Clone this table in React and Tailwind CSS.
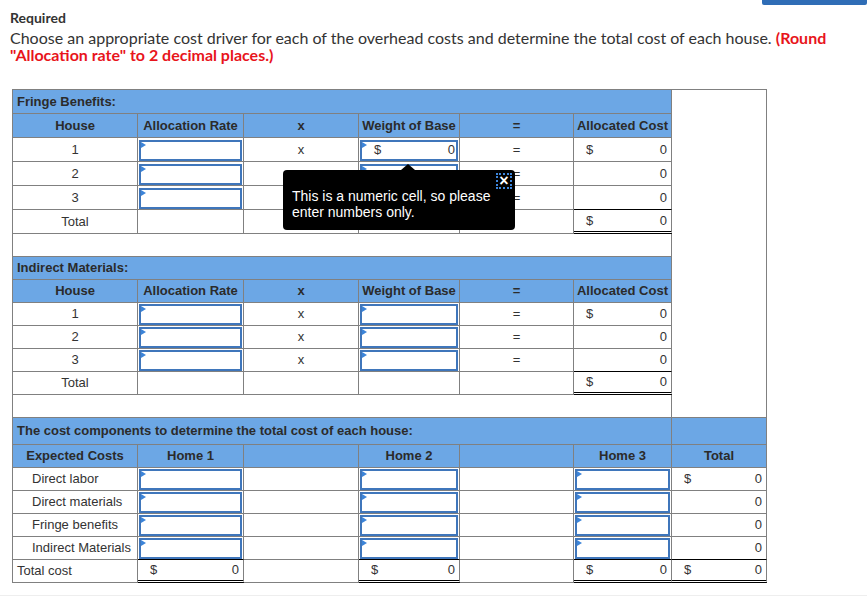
import React from "react";

const LINE = "border-r border-b border-[#808080]";
const BLUE = "bg-[#6ca7e5]";

// small blue marker in the top-left corner of every entry cell
const Marker = () => (
  <span className="absolute left-0 top-0 w-0 h-0 border-l-[5px] border-l-[#3c84d8] border-y-[3px] border-y-transparent" />
);

const HeadCell = ({ children, className = "" }) => (
  <td className={`${LINE} ${BLUE} font-bold text-[13px] text-[#2b2b2b] text-center ${className}`}>
    {children}
  </td>
);

const HeadSpan = ({ children, colSpan, className = "" }) => (
  <td
    colSpan={colSpan}
    className={`${LINE} ${BLUE} font-bold text-[13px] text-[#2b2b2b] text-left pl-1 ${className}`}
  >
    {children}
  </td>
);

const TextCell = ({ children, className = "" }) => (
  <td className={`${LINE} text-[13px] text-[#333] text-center ${className}`}>{children}</td>
);

const InputCell = ({ dollar, under }) => (
  <td className={`${LINE} p-0 ${under ? "border-b-black" : ""}`}>
    <div className="relative mx-px mt-px h-[21px] border-2 border-[#3f76bb] bg-white flex items-center justify-between pl-3 pr-[1px] text-[13px] text-[#333]">
      <Marker />
      {dollar && (
        <>
          <span>$</span>
          <span>0</span>
        </>
      )}
    </div>
  </td>
);

const MoneyCell = ({ dollar, total, under }) => (
  <td
    className={`${LINE} text-[13px] text-[#333] p-0 ${
      total ? "border-b-[3px] border-double border-b-black" : ""
    } ${under ? "border-b-black" : ""}`}
  >
    <div className="flex justify-between pl-3 pr-[4px]">
      <span>{dollar ? "$" : ""}</span>
      <span>0</span>
    </div>
  </td>
);

const Blank = ({ under, colSpan, className = "" }) => (
  <td colSpan={colSpan} className={`${LINE} ${under ? "border-b-black" : ""} ${className}`} />
);

const costRows = ["Direct labor", "Direct materials", "Fringe benefits", "Indirect Materials"];

export default function App() {
  return (
    <div className="relative w-[867px] h-[602px] bg-white overflow-hidden font-['Liberation_Sans',Arial,sans-serif]">
      <div className="flex justify-end">
        <div className="w-[105px] h-[5px] bg-[#2f6db6] rounded-b-[2px]" />
      </div>

      <div className="pl-[10px] pr-2 text-[#333] font-['Lato',sans-serif]">
        <div className="text-[14px] font-bold leading-[18px] mt-[4px]">Required</div>
        <p className="text-[16px] leading-[17px] mt-[2px]">
          Choose an appropriate cost driver for each of the overhead costs and determine the total
          cost of each house.{" "}
          <span className="font-bold text-[#e8141b]">
            (Round "Allocation rate" to 2 decimal places.)
          </span>
        </p>
      </div>

      <table className="ml-[12px] mt-[26px] table-fixed border-separate border-spacing-0 border-l border-t border-[#808080] w-[754px]">
        <colgroup>
          <col className="w-[125px]" />
          <col className="w-[106px]" />
          <col className="w-[115px]" />
          <col className="w-[101px]" />
          <col className="w-[114px]" />
          <col className="w-[98px]" />
          <col className="w-[95px]" />
        </colgroup>
        <tbody>
          <tr className="h-[24px]">
            <HeadSpan colSpan={6}>Fringe Benefits:</HeadSpan>
            <td rowSpan={14} className={`${LINE} bg-white`} />
          </tr>
          <tr className="h-[24px]">
            <HeadCell>House</HeadCell>
            <HeadCell>Allocation Rate</HeadCell>
            <HeadCell>x</HeadCell>
            <HeadCell>Weight of Base</HeadCell>
            <HeadCell>=</HeadCell>
            <HeadCell>Allocated Cost</HeadCell>
          </tr>
          {[1, 2, 3].map((n) => (
            <tr key={n} className="h-[24px]">
              <TextCell>{n}</TextCell>
              <InputCell />
              <TextCell>x</TextCell>
              <InputCell dollar={n === 1} />
              <TextCell>=</TextCell>
              <MoneyCell dollar={n === 1} under={n === 3} />
            </tr>
          ))}
          <tr className="h-[24px]">
            <TextCell>Total</TextCell>
            <Blank />
            <Blank />
            <Blank />
            <Blank />
            <MoneyCell dollar total />
          </tr>
          <tr className="h-[23px]">
            <Blank colSpan={6} />
          </tr>

          <tr className="h-[23px]">
            <HeadSpan colSpan={6}>Indirect Materials:</HeadSpan>
          </tr>
          <tr className="h-[23px]">
            <HeadCell>House</HeadCell>
            <HeadCell>Allocation Rate</HeadCell>
            <HeadCell>x</HeadCell>
            <HeadCell>Weight of Base</HeadCell>
            <HeadCell>=</HeadCell>
            <HeadCell>Allocated Cost</HeadCell>
          </tr>
          {[1, 2, 3].map((n) => (
            <tr key={n} className="h-[23px]">
              <TextCell>{n}</TextCell>
              <InputCell />
              <TextCell>x</TextCell>
              <InputCell />
              <TextCell>=</TextCell>
              <MoneyCell dollar={n === 1} under={n === 3} />
            </tr>
          ))}
          <tr className="h-[23px]">
            <TextCell>Total</TextCell>
            <Blank />
            <Blank />
            <Blank />
            <Blank />
            <MoneyCell dollar total />
          </tr>
          <tr className="h-[23px]">
            <Blank colSpan={6} />
          </tr>

          <tr className="h-[27px]">
            <HeadSpan colSpan={6}>The cost components to determine the total cost of each house:</HeadSpan>
            <HeadCell />
          </tr>
          <tr className="h-[23px]">
            <HeadCell>Expected Costs</HeadCell>
            <HeadCell>Home 1</HeadCell>
            <HeadCell />
            <HeadCell>Home 2</HeadCell>
            <HeadCell />
            <HeadCell>Home 3</HeadCell>
            <HeadCell>Total</HeadCell>
          </tr>
          {costRows.map((label, i) => {
            const last = i === costRows.length - 1;
            return (
              <tr key={label} className="h-[23px]">
                <TextCell className="text-left pl-[19px] whitespace-nowrap">{label}</TextCell>
                <InputCell under={last} />
                <Blank />
                <InputCell under={last} />
                <Blank />
                <InputCell under={last} />
                <MoneyCell dollar={i === 0} under={last} />
              </tr>
            );
          })}
          <tr className="h-[23px]">
            <TextCell className="text-left pl-1">Total cost</TextCell>
            <MoneyCell dollar total />
            <Blank />
            <MoneyCell dollar total />
            <Blank />
            <MoneyCell dollar total />
            <MoneyCell dollar total />
          </tr>
        </tbody>
      </table>

      <div className="mt-[12px] border-t border-[#eeeeee]" />

      {/* validation tooltip over the Weight of Base column */}
      <div className="absolute left-[283px] top-[170px] w-[232px] h-[60px] bg-black rounded-[4px] text-white text-[14px] leading-[16px] pl-[9px] pt-[18px]">
        <span className="absolute left-[118px] -top-[6px] w-0 h-0 border-x-[7px] border-x-transparent border-b-[6px] border-b-black" />
        <div className="absolute right-[3px] top-[3px] w-[16px] h-[16px] border-2 border-dotted border-[#3d86dc] flex items-center justify-center text-[16px] leading-none font-bold">
          ×
        </div>
        <div>This is a numeric cell, so please</div>
        <div>enter numbers only.</div>
      </div>
    </div>
  );
}
